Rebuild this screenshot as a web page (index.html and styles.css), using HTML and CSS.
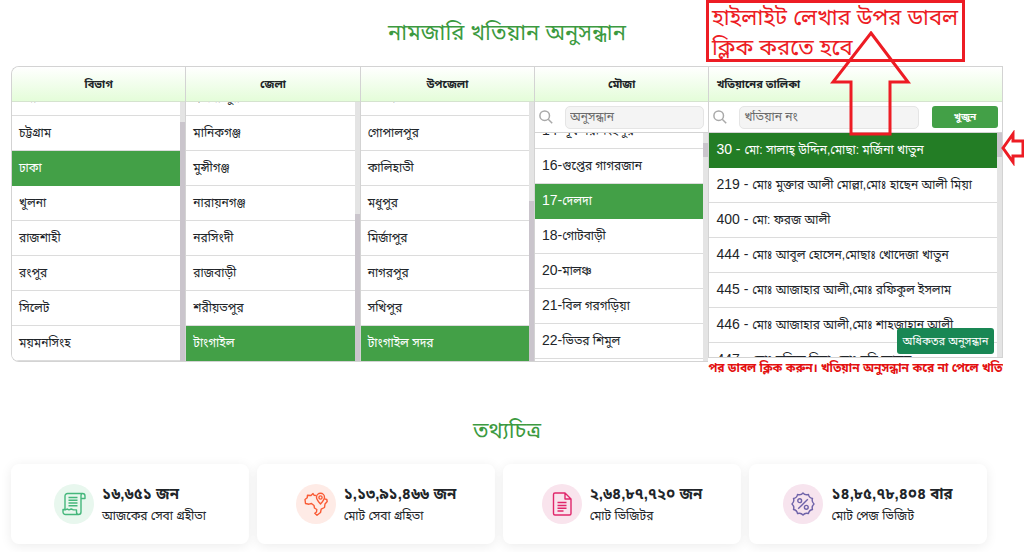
FILE: index.html
```html
<!DOCTYPE html>
<html lang="bn">
<head>
<meta charset="utf-8">
<meta name="viewport" content="width=device-width, initial-scale=1">
<title>নামজারি খতিয়ান অনুসন্ধান</title>
<link rel="stylesheet" href="styles.css">
</head>
<body>
<main class="page">
  <h1 class="title">নামজারি খতিয়ান অনুসন্ধান</h1>

  <div class="finder">
    <section class="column">
      <h2 class="column-head">বিভাগ</h2>
      <div class="column-body">
        <ul class="list list-end">
          <li><button class="row">বরিশাল</button></li>
          <li><button class="row">চট্টগ্রাম</button></li>
          <li><button class="row selected">ঢাকা</button></li>
          <li><button class="row">খুলনা</button></li>
          <li><button class="row">রাজশাহী</button></li>
          <li><button class="row">রংপুর</button></li>
          <li><button class="row">সিলেট</button></li>
          <li><button class="row">ময়মনসিংহ</button></li>
        </ul>
        <div class="track"><div class="thumb thumb-division"></div></div>
      </div>
    </section>

    <section class="column">
      <h2 class="column-head">জেলা</h2>
      <div class="column-body">
        <ul class="list list-end">
          <li><button class="row">মাদারীপুর</button></li>
          <li><button class="row">মানিকগঞ্জ</button></li>
          <li><button class="row">মুন্সীগঞ্জ</button></li>
          <li><button class="row">নারায়নগঞ্জ</button></li>
          <li><button class="row">নরসিংদী</button></li>
          <li><button class="row">রাজবাড়ী</button></li>
          <li><button class="row">শরীয়তপুর</button></li>
          <li><button class="row selected">টাংগাইল</button></li>
        </ul>
        <div class="track"><div class="thumb thumb-district"></div></div>
      </div>
    </section>

    <section class="column">
      <h2 class="column-head">উপজেলা</h2>
      <div class="column-body">
        <ul class="list list-end">
          <li><button class="row">ঘাটাইল</button></li>
          <li><button class="row">গোপালপুর</button></li>
          <li><button class="row">কালিহাতী</button></li>
          <li><button class="row">মধুপুর</button></li>
          <li><button class="row">মির্জাপুর</button></li>
          <li><button class="row">নাগরপুর</button></li>
          <li><button class="row">সখিপুর</button></li>
          <li><button class="row selected">টাংগাইল সদর</button></li>
        </ul>
        <div class="track"><div class="thumb thumb-upazila"></div></div>
      </div>
    </section>

    <section class="column">
      <h2 class="column-head">মৌজা</h2>
      <div class="search">
        <svg class="search-icon" viewBox="0 0 14 14" aria-hidden="true"><circle cx="5.7" cy="5.7" r="4.8"/><path d="M9.2 9.2 13.2 13.2"/></svg>
        <input class="search-input" type="text" placeholder="অনুসন্ধান" aria-label="মৌজা অনুসন্ধান">
      </div>
      <div class="column-body body-mouza">
        <ul class="list list-end">
          <li><button class="row"><span class="num">14-</span>পূর্ব নরসিংহপুর</button></li>
          <li><button class="row"><span class="num">16-</span>গুপ্তের গাগরজান</button></li>
          <li><button class="row selected"><span class="num">17-</span>দেলদা</button></li>
          <li><button class="row"><span class="num">18-</span>গোটবাড়ী</button></li>
          <li><button class="row"><span class="num">20-</span>মালঞ্চ</button></li>
          <li><button class="row"><span class="num">21-</span>বিল গরগড়িয়া</button></li>
          <li><button class="row"><span class="num">22-</span>ভিতর শিমুল</button></li>
        </ul>
        <div class="track"><div class="thumb thumb-mouza"></div></div>
      </div>
    </section>

    <div class="khatian">
      <section class="column column-last">
        <h2 class="column-head head-start">খতিয়ানের তালিকা</h2>
        <div class="search">
          <svg class="search-icon" viewBox="0 0 14 14" aria-hidden="true"><circle cx="5.7" cy="5.7" r="4.8"/><path d="M9.2 9.2 13.2 13.2"/></svg>
          <input class="search-input" type="text" placeholder="খতিয়ান নং" aria-label="খতিয়ান নং">
          <button class="search-button">খুজুন</button>
        </div>
        <div class="column-body body-khatian">
          <ul class="list">
            <li><button class="row selected-dark"><span class="num">30 - </span>মো: সালাহ্ উদ্দিন,মোছা: মর্জিনা খাতুন</button></li>
            <li><button class="row"><span class="num">219 - </span>মোঃ মুক্তার আলী মোল্লা,মোঃ হাছেন আলী মিয়া</button></li>
            <li><button class="row"><span class="num">400 - </span>মো: ফরজ আলী</button></li>
            <li><button class="row"><span class="num">444 - </span>মোঃ আবুল হোসেন,মোছাঃ খোদেজা খাতুন</button></li>
            <li><button class="row"><span class="num">445 - </span>মোঃ আজাহার আলী,মোঃ রফিকুল ইসলাম</button></li>
            <li><button class="row"><span class="num">446 - </span>মোঃ আজাহার আলী,মোঃ শাহজাহান আলী</button></li>
            <li><button class="row"><span class="num">447 - </span>মোঃ রফিক মিয়া, মোঃ রবি আলম</button></li>
          </ul>
          <div class="track"><div class="thumb thumb-khatian"></div></div>
          <button class="more">অধিকতর অনুসন্ধান</button>
        </div>
      </section>
      <p class="ticker">পর ডাবল ক্লিক করুন। খতিয়ান অনুসন্ধান করে না পেলে খতিয়ান</p>
    </div>
  </div>

  <h2 class="title">তথ্যচিত্র</h2>

  <div class="cards">
    <article class="card">
      <span class="badge badge-green">
        <svg viewBox="0 0 24 24" aria-hidden="true"><path d="M3 17V4a2.500 2.500 0 0 1 2.500-2.500H20.500A2.500 2.500 0 0 1 23 4v2.500h-4M19 6.500V4c0-1.400.6-2.500 1.500-2.500M19 6.500V20a2.500 2.500 0 0 1-2.500 2.500H3.500A2.500 2.500 0 0 1 1 20v-2.500l2.500.3 1.500-.8 2 .9 2.200-.9 2.300.9H14.500V20c0 1.500.8 2.500 2 2.500M6.500 5.500h9M6.500 8.200h9M6.500 11h9M6.500 13.700h9"/></svg>
      </span>
      <div><strong class="figure">১৬,৬৫১ জন</strong><p class="caption">আজকের সেবা গ্রহীতা</p></div>
    </article>
    <article class="card">
      <span class="badge badge-orange">
        <svg viewBox="0 0 24 24" aria-hidden="true"><path d="M12.200 3.500 10 3.200 9 1.500 7 3.500 3.500 3.200 3.200 5.800 1 7.500 1.500 11.500 5 12.200 7.500 11.500 10 13.500 10.500 16 12.800 17.500 12.500 20 10.800 21.200 13 23.200 16.500 20.500 17.200 17.200 20.500 15.500 21 12 23.200 9.500 22.800 7.500 20.500 6.800"/><path d="M16.500 12c-2.200-2.400-4-4.300-4-6.700a4 4 0 0 1 8 0c0 2.400-1.800 4.300-4 6.700Z"/><circle cx="16.500" cy="5.500" r="1.600"/></svg>
      </span>
      <div><strong class="figure">১,১৩,৯১,৪৬৬ জন</strong><p class="caption">মোট সেবা গ্রহিতা</p></div>
    </article>
    <article class="card">
      <span class="badge badge-pink">
        <svg viewBox="0 0 24 24" aria-hidden="true"><path d="M3.500 2.500a1.500 1.500 0 0 1 1.500-1.500h10l6 6v14.500a1.500 1.500 0 0 1-1.500 1.500H5a1.500 1.500 0 0 1-1.500-1.500ZM15 1v6h6M7.500 10.500h9M7.500 13.500h9M7.500 16.300h9M7.500 19h6"/></svg>
      </span>
      <div><strong class="figure">২,৬৪,৮৭,৭২০ জন</strong><p class="caption">মোট ভিজিটর</p></div>
    </article>
    <article class="card">
      <span class="badge badge-purple">
        <svg viewBox="0 0 24 24" aria-hidden="true"><path d="M12 1Q14 3.600 17.500 2.500 17.900 5.800 21.500 6.500 20.400 9.500 23 12 20.400 14.500 21.500 17.500 17.900 18.200 17.500 21.500 14 20.400 12 23 10 20.400 6.500 21.500 6.100 18.200 2.500 17.500 3.600 14.500 1 12 3.600 9.500 2.500 6.500 6.100 5.800 6.500 2.500 10 3.600 12 1Z"/><circle cx="8.700" cy="8.700" r="1.900"/><circle cx="15.300" cy="15.300" r="1.900"/><path d="M16.800 7.200 7.200 16.800"/></svg>
      </span>
      <div><strong class="figure">১৪,৮৫,৭৮,৪০৪ বার</strong><p class="caption">মোট পেজ ভিজিট</p></div>
    </article>
  </div>

  <div class="note">হাইলাইট লেখার উপর ডাবল ক্লিক করতে হবে</div>
  <svg class="arrow arrow-up" viewBox="0 0 82 106" aria-hidden="true"><path d="M41 2 78 51H60V103H21V51H3Z"/></svg>
  <svg class="arrow arrow-left" viewBox="0 0 24 36" aria-hidden="true"><path d="M3 18 13 4V11H23V26H13V32Z"/></svg>
</main>
</body>
</html>
```
FILE: styles.css
```css
* { box-sizing: border-box; }

body {
  margin: 0;
  background: #fff;
  color: #212529;
  font-family: "Liberation Sans", "Noto Sans Bengali", sans-serif;
  font-size: 12px;
  line-height: 20px;
  overflow: hidden;
}

h1, h2, p, ul { margin: 0; padding: 0; }
ul { list-style: none; }
button, input { font: inherit; color: inherit; }

.page {
  position: relative;
  padding: 16px 21px 8px 11px;
}

.title {
  color: #3c9a40;
  font-size: 22px;
  font-weight: 400;
  line-height: 34px;
  text-align: center;
}

.finder {
  display: grid;
  grid-template-columns: repeat(4, minmax(0, 174fr)) minmax(0, 294fr);
  align-items: start;
  margin: 16px 0 36px;
}

.column {
  border: 1px solid #d3d3d3;
  border-right: 0;
  overflow: hidden;
}
.column:first-child { border-radius: 8px 0 0 8px; }
.finder .column-last {
  border-right: 1px solid #d3d3d3;
  border-radius: 0;
}

.column-head {
  height: 35px;
  border-bottom: 1px solid #d5e3cf;
  background: linear-gradient(#fff, #e4fdd9);
  font-size: 11px;
  font-weight: 700;
  line-height: 34px;
  text-align: center;
}
.head-start { padding-left: 7px; text-align: left; }

.column-body {
  position: relative;
  display: flex;
  height: 259px;
}
.body-mouza { height: 228px; }
.body-khatian { height: 224px; }

.list {
  flex: 1;
  min-width: 0;
  display: flex;
  flex-direction: column;
  overflow: hidden;
}
.list-end { justify-content: flex-end; }
.body-mouza .list { padding-bottom: 2px; }

.row {
  display: block;
  width: 100%;
  height: 35px;
  padding: 0 7px;
  border: 0;
  border-bottom: 1px solid #dcdcdc;
  background: #fff;
  text-align: left;
  white-space: nowrap;
}
.body-mouza .row, .body-khatian .row { padding-bottom: 2px; }
.num { font-size: 14px; white-space: pre; }
.selected { background: #43a047; color: #fff; border-color: #43a047; }
.selected-dark { background: #237d25; color: #fff; border-color: #237d25; }

.track { width: 5px; background: #e4e4e4; }
.thumb { background: #cac5cc; }
.thumb-division { height: 239px; margin-top: 20px; }
.thumb-district { height: 147px; margin-top: 112px; }
.thumb-upazila { height: 160px; margin-top: 99px; }
.thumb-mouza { height: 14px; margin-top: 10px; }
.thumb-khatian { height: 24px; }

.search {
  display: flex;
  align-items: center;
  height: 31px;
  padding: 0 4px;
  border-bottom: 1px solid #d3d3d3;
}
.search-icon {
  flex: none;
  width: 14px;
  height: 14px;
  margin-right: 12px;
  fill: none;
  stroke: #a9a9a9;
  stroke-width: 1.5;
}
.search-input {
  flex: 1;
  min-width: 0;
  height: 23px;
  padding: 0 4px;
  border: 1px solid #e5e5e5;
  border-radius: 5px;
  background: #f4f4f4;
}
.search-input::placeholder { color: #6c6c6c; opacity: 1; }
.search-button {
  width: 66px;
  height: 22px;
  margin-left: 13px;
  padding: 0;
  border: 0;
  border-radius: 3px;
  background: #43a047;
  color: #fff;
  font-size: 10px;
  font-weight: 700;
  line-height: 22px;
}

.more {
  position: absolute;
  right: 8px;
  bottom: 3px;
  width: 97px;
  height: 26px;
  padding: 0;
  border: 0;
  border-radius: 3px;
  background: #198754;
  color: #fff;
  font-size: 11px;
}

.ticker {
  height: 20px;
  overflow: hidden;
  color: #e31010;
  font-weight: 700;
  line-height: 20px;
  white-space: nowrap;
}

.cards {
  display: grid;
  grid-template-columns: repeat(4, minmax(0, 1fr));
  gap: 8px;
  margin-top: 16px;
  padding-right: 16px;
}
.card {
  display: flex;
  align-items: center;
  justify-content: center;
  gap: 8px;
  height: 80px;
  border-radius: 8px;
  background: #fff;
  box-shadow: 0 2px 12px rgba(0, 0, 0, 0.08);
}
.badge {
  flex: none;
  display: grid;
  place-items: center;
  width: 40px;
  height: 40px;
  border-radius: 50%;
}
.badge svg {
  width: 24px;
  height: 24px;
  fill: none;
  stroke: currentColor;
  stroke-width: 1.4;
  stroke-linejoin: round;
}
.badge-green { background: #e8f7ee; color: #45b77c; }
.badge-orange { background: #feebe6; color: #f95b35; }
.badge-pink { background: #f9e4ed; color: #e0276b; }
.badge-purple { background: #f7e4ee; color: #6f63a9; }
.figure { display: block; font-size: 15px; line-height: 24px; }
.caption { line-height: 20px; }

.note {
  position: absolute;
  top: 0;
  left: 706px;
  width: 259px;
  height: 62px;
  padding: 0 3px;
  border: 3px solid #ed1c24;
  color: #ed1c24;
  font-size: 22px;
  line-height: 30px;
}
.arrow {
  position: absolute;
  fill: none;
  stroke: #ed1c24;
  stroke-width: 3;
}
.arrow-up { top: 31px; left: 830px; width: 82px; height: 106px; }
.arrow-left { top: 130px; left: 1000px; width: 24px; height: 36px; }
```
